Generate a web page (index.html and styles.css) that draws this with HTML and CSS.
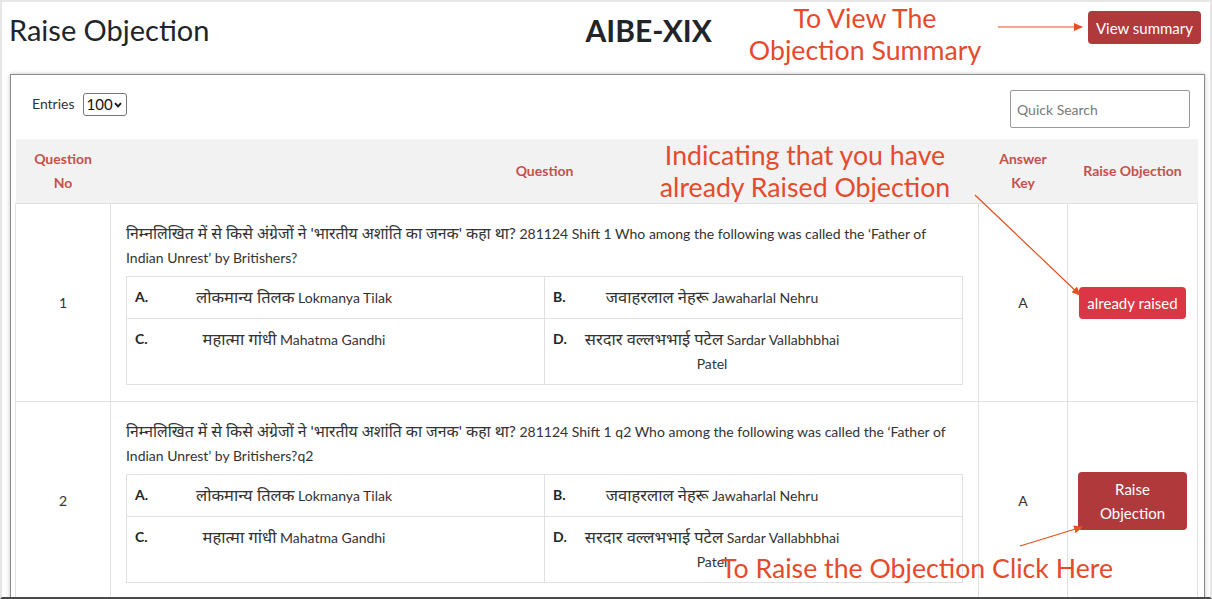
FILE: index.html
```html
<!DOCTYPE html>
<html lang="hi">
<head>
<meta charset="utf-8">
<title>Raise Objection</title>
<link rel="stylesheet" href="styles.css">
</head>
<body>
<div class="page">
  <header class="topbar">
    <h1 class="title">Raise Objection</h1>
    <h2 class="exam">AIBE-XIX</h2>
    <button class="btn btn-summary" type="button">View summary</button>
  </header>

  <section class="card">
    <div class="toolbar">
      <label class="entries">Entries
        <span class="select-wrap">
          <select class="entries-select">
            <option>100</option>
          </select>
          <svg class="chev" width="8" height="6" viewBox="0 0 8 6" aria-hidden="true"><path d="M1 1.2 L4 4.4 L7 1.2" fill="none" stroke="#111" stroke-width="1.8"/></svg>
        </span>
      </label>
      <input class="search" type="text" placeholder="Quick Search">
    </div>

    <table class="qtable">
      <colgroup>
        <col class="c-no">
        <col class="c-q">
        <col class="c-key">
        <col class="c-act">
      </colgroup>
      <thead>
        <tr>
          <th>Question No</th>
          <th>Question</th>
          <th>Answer Key</th>
          <th>Raise Objection</th>
        </tr>
      </thead>
      <tbody>
        <tr>
          <td class="num">1</td>
          <td class="qcell">
            <p class="qtext"><span class="hi">निम्नलिखित में से किसे अंग्रेजों ने 'भारतीय अशांति का जनक' कहा था?</span> 281124 Shift 1 Who among the following was called the ‘Father of Indian Unrest’ by Britishers?</p>
            <table class="opts">
              <tr>
                <td><div class="opt"><b class="lbl">A.</b><span class="otext"><span class="hi">लोकमान्य तिलक</span> Lokmanya Tilak</span></div></td>
                <td><div class="opt"><b class="lbl">B.</b><span class="otext"><span class="hi">जवाहरलाल नेहरू</span> Jawaharlal Nehru</span></div></td>
              </tr>
              <tr>
                <td><div class="opt"><b class="lbl">C.</b><span class="otext"><span class="hi">महात्मा गांधी</span> Mahatma Gandhi</span></div></td>
                <td><div class="opt"><b class="lbl">D.</b><span class="otext"><span class="hi">सरदार वल्लभभाई पटेल</span> Sardar Vallabhbhai Patel</span></div></td>
              </tr>
            </table>
          </td>
          <td class="num">A</td>
          <td class="act"><button class="btn btn-raised" type="button">already raised</button></td>
        </tr>
        <tr>
          <td class="num">2</td>
          <td class="qcell">
            <p class="qtext"><span class="hi">निम्नलिखित में से किसे अंग्रेजों ने 'भारतीय अशांति का जनक' कहा था?</span> 281124 Shift 1 q2 Who among the following was called the ‘Father of Indian Unrest’ by Britishers?q2</p>
            <table class="opts">
              <tr>
                <td><div class="opt"><b class="lbl">A.</b><span class="otext"><span class="hi">लोकमान्य तिलक</span> Lokmanya Tilak</span></div></td>
                <td><div class="opt"><b class="lbl">B.</b><span class="otext"><span class="hi">जवाहरलाल नेहरू</span> Jawaharlal Nehru</span></div></td>
              </tr>
              <tr>
                <td><div class="opt"><b class="lbl">C.</b><span class="otext"><span class="hi">महात्मा गांधी</span> Mahatma Gandhi</span></div></td>
                <td><div class="opt"><b class="lbl">D.</b><span class="otext"><span class="hi">सरदार वल्लभभाई पटेल</span> Sardar Vallabhbhai Patel</span></div></td>
              </tr>
            </table>
          </td>
          <td class="num">A</td>
          <td class="act"><button class="btn btn-raise" type="button">Raise Objection</button></td>
        </tr>
      </tbody>
    </table>
  </section>

  <div class="note note-summary">To View The<br>Objection Summary</div>
  <div class="note note-raised">Indicating that you have<br>already Raised Objection</div>
  <div class="note note-click">To Raise the Objection Click Here</div>

  <svg class="arrows" width="1212" height="599" viewBox="0 0 1212 599" aria-hidden="true">
    <defs>
      <marker id="head" markerWidth="9" markerHeight="8" refX="8" refY="4" orient="auto" markerUnits="userSpaceOnUse">
        <path d="M0,0 L9,4 L0,8 Z" fill="#e0521f"/>
      </marker>
    </defs>
    <line x1="998" y1="27" x2="1082" y2="27" stroke="#e0521f" stroke-width="1.2" marker-end="url(#head)"/>
    <line x1="975" y1="195" x2="1080" y2="295" stroke="#e0521f" stroke-width="1.2" marker-end="url(#head)"/>
    <line x1="1020" y1="546" x2="1082" y2="527" stroke="#e0521f" stroke-width="1.2" marker-end="url(#head)"/>
  </svg>
</div>
</body>
</html>
```

FILE: styles.css
```css
* { box-sizing: border-box; }

html, body {
  margin: 0;
  padding: 0;
  background: #ffffff;
}

body {
  font-family: "Lato", "Noto Sans Devanagari", "Noto Sans", "Lohit Devanagari", "FreeSans", sans-serif;
  font-size: 14px;
  line-height: 24px;
  color: #333333;
}

.hi { font-size: 16.5px; }
.qtext .hi { font-size: 15.8px; }

.page {
  position: relative;
  width: 1212px;
  height: 599px;
  overflow: hidden;
  border-top: 2px solid #e6e6e6;
  border-left: 2px solid #e6e6e6;
  border-right: 2px solid #e6e6e6;
  border-bottom: 2px solid #4a4a4a;
}

/* ---------- header ---------- */
.topbar {
  display: flex;
  justify-content: space-between;
  align-items: flex-start;
  height: 72px;
  padding: 10px 9px 0 7px;
}

.title,
.exam {
  margin: 0;
  font-size: 29px;
  line-height: 36px;
  color: #212529;
}

.title { font-weight: 400; }
.exam  { font-weight: 700; font-size: 30px; }

.btn {
  font-family: inherit;
  font-size: 15px;
  line-height: 24px;
  color: #ffffff;
  border: 0;
  border-radius: 4px;
  cursor: pointer;
}

.btn-summary {
  margin-top: -1px;
  height: 33px;
  padding: 0 8px;
  background: #b0393b;
}

/* ---------- card ---------- */
.card {
  margin: 0 5px 0 8px;
  padding: 15px 6px 0 4px;
  border: 1px solid #8c8c8c;
  box-shadow: 0 0 4px rgba(0, 0, 0, 0.25);
  height: 540px;
}

.toolbar {
  display: flex;
  justify-content: space-between;
  align-items: flex-start;
  padding: 0 8px 11px 17px;
}

.entries {
  display: flex;
  align-items: center;
  gap: 8px;
  margin-top: 2px;
  color: #333333;
}

.select-wrap {
  position: relative;
  display: inline-block;
  width: 44px;
  height: 23px;
}

.entries-select {
  appearance: none;
  -webkit-appearance: none;
  width: 44px;
  height: 23px;
  font-family: inherit;
  font-size: 15px;
  color: #111111;
  border: 1px solid #767676;
  border-radius: 3px;
  background: #ffffff;
  padding: 0 0 0 3px;
}

.chev {
  position: absolute;
  right: 5px;
  top: 9px;
  pointer-events: none;
}

.search {
  width: 180px;
  height: 38px;
  padding: 0 6px;
  font-family: inherit;
  font-size: 14px;
  color: #333333;
  border: 1px solid #9a9a9a;
  border-radius: 2px;
}

.search::placeholder { color: #7a7a7a; }

/* ---------- table ---------- */
.qtable {
  width: 100%;
  border-collapse: collapse;
  table-layout: fixed;
}

.c-no  { width: 95px; }
.c-key { width: 89px; }
.c-act { width: 130px; }

.qtable th {
  background: #f2f2f2;
  color: #c6504b;
  font-weight: 700;
  font-size: 14px;
  line-height: 24px;
  padding: 8px 10px;
  text-align: center;
  vertical-align: middle;
  border-bottom: 1px solid #dee2e6;
}

.qtable td {
  border: 1px solid #dee2e6;
  vertical-align: middle;
}

.qtable td.num {
  text-align: center;
  color: #333333;
}

.qtable td.qcell {
  padding: 17px 15px 16px 15px;
}

.qtable td.act {
  padding: 0 10px;
  text-align: center;
}

.qtext {
  margin: 0 0 6px 0;
  padding-right: 10px;
  color: #333333;
}

.opts {
  width: 100%;
  border-collapse: collapse;
  table-layout: fixed;
}

.opts td {
  width: 50%;
  border: 1px solid #dde1e5;
  padding: 8px 8px 8px 8px;
  vertical-align: top;
}

.opt {
  display: flex;
  align-items: flex-start;
}

.lbl {
  flex: 0 0 26px;
  font-weight: 700;
  color: #212529;
}

.otext {
  flex: 0 0 266px;
  text-align: center;
}

.btn-raised {
  background: #dc3545;
  height: 32px;
  padding: 0 8px;
  white-space: nowrap;
}

.btn-raise {
  background: #b0393b;
  padding: 5px 12px;
}

/* ---------- annotations ---------- */
.note {
  position: absolute;
  color: #e64a2c;
  font-size: 26.7px;
  line-height: 32px;
  text-align: center;
  white-space: nowrap;
}

.note-summary { left: 736px; top: 0px; width: 254px; }
.note-raised  { left: 648px; top: 137px; width: 310px; }
.note-click   { left: 714px; top: 550px; width: 402px; }

.arrows {
  position: absolute;
  left: -2px;
  top: -2px;
  pointer-events: none;
}
```
